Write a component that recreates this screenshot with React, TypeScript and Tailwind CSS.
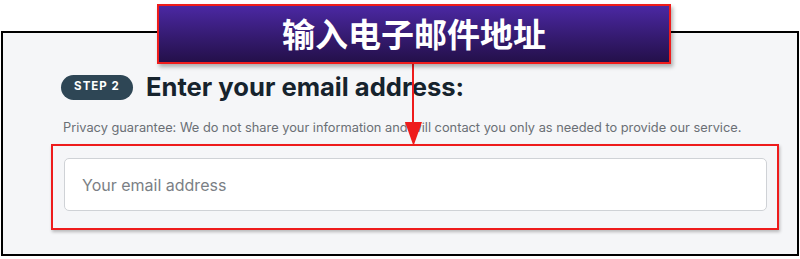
export default function App() {
  return (
    <div className="relative w-[800px] h-[259px] bg-white overflow-hidden" style={{ fontFamily: 'Inter, "Noto Sans", sans-serif' }}>
      {/* Form card */}
      <div className="ml-[1px] mt-[31px] w-[798px] h-[225px] border-2 border-black bg-[#f5f6f8] pl-[58px] pr-[30px] pt-[40px]">
        <div className="flex items-center gap-[13px]">
          <span className="flex items-center justify-center w-[72px] h-[25px] rounded-full bg-[#2e4655] text-white text-[11.5px] font-bold tracking-[0.09em]">
            STEP 2
          </span>
          <h2 className="text-[25.6px] leading-[28px] font-bold text-[#16232d]">Enter your email address:</h2>
        </div>
        <p className="mt-[19px] ml-[2px] text-[12.8px] leading-[16px] text-[#6a6f75]">
          Privacy guarantee: We do not share your information and will contact you only as needed to provide our service.
        </p>
        <div className="mt-[8px] -ml-[10px] w-[728px] h-[86px] border-2 border-[#ee1c1c] shadow-[1px_2px_3px_rgba(0,0,0,0.25)] pl-[11px] pr-[10px] pt-[12px]">
          <div className="flex items-center h-[53px] rounded-[5px] border border-[#cfd2d6] bg-white px-[17px] text-[16px] text-[#7b7f85]">
            Your email address
          </div>
        </div>
      </div>

      {/* Annotation arrow */}
      <div className="absolute left-[412px] top-[60px] w-[2px] h-[66px] bg-[#ee1c1c]" />
      <svg className="absolute left-[405px] top-[122px]" width="17" height="24" viewBox="0 0 17 24">
        <polygon points="0,0 17,0 8.5,24" fill="#ee1c1c" />
      </svg>

      {/* Annotation title */}
      <div className="absolute left-[157px] top-[4px] w-[514px] h-[60px] border-2 border-[#ee1c1c] bg-gradient-to-b from-[#4b28a3] to-[#24104a] shadow-[2px_3px_4px_rgba(0,0,0,0.3)] flex items-center justify-center">
        <span className="text-white text-[33px] font-bold" style={{ fontFamily: '"Noto Sans CJK SC", sans-serif' }}>
          输入电子邮件地址
        </span>
      </div>
    </div>
  )
}
